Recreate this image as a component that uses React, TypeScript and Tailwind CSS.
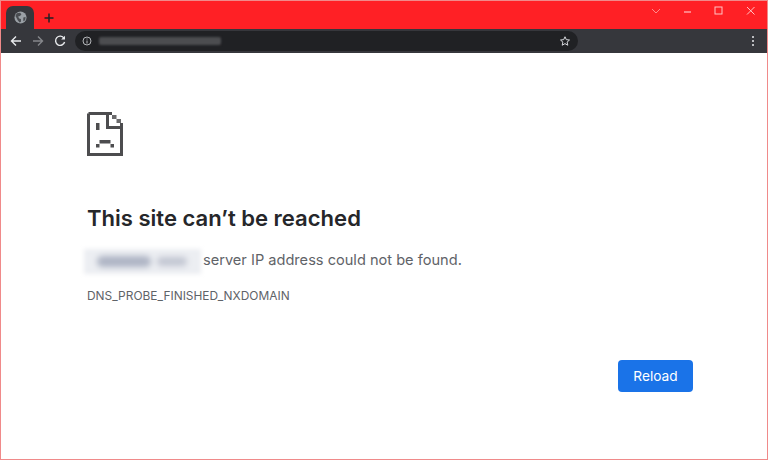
import React from "react";

function Globe() {
  return (
    <svg width="13" height="13" viewBox="0 0 14 14">
      <circle cx="7" cy="7" r="6.5" fill="#9aa0a6" />
      <path d="M3 2.5 L6.5 2 L8 3.5 L6.5 5.5 L4.5 6 L5.5 8 L7.5 8.5 L7.5 11.5 L6 12.5 L4 10 L2.5 7 L1.5 5.5 Z M10 7 L12.5 6.5 L12 10 L10 11 Z" fill="#4a4d52" />
    </svg>
  );
}

function SadFile() {
  return (
    <svg width="36" height="44" viewBox="0 0 36 44" fill="none" className="block">
      <path d="M1.5 1.5H25M34.5 11V42.5H1.5V1.5" stroke="#4d4d4f" strokeWidth="3" fill="none" />
      <path d="M20.5 1.5V15.5H34.5" stroke="#4d4d4f" strokeWidth="3" fill="none" />
      <rect x="25" y="3" width="4.5" height="4" fill="#6a6a6c" />
      <rect x="29.5" y="7" width="4.5" height="4" fill="#6a6a6c" />
      <rect x="9" y="11" width="3.5" height="7" fill="#4d4d4f" />
      <rect x="9" y="32" width="3.5" height="3.5" fill="#4d4d4f" />
      <rect x="12.5" y="28" width="11" height="3.5" fill="#4d4d4f" />
      <rect x="23.5" y="32" width="3.5" height="3.5" fill="#4d4d4f" />
    </svg>
  );
}

export default function App() {
  return (
    <div className="w-[768px] h-[460px] bg-white border border-[#f08a8a] flex flex-col overflow-hidden font-['Inter',sans-serif]">
      <div className="h-[28px] bg-[#ff2025] flex shrink-0 relative">
        <div className="ml-[5px] mt-[5px] w-[28px] h-[23px] bg-[#36373c] rounded-t-[7px] flex items-center justify-center">
          <Globe />
        </div>
        <svg width="10" height="10" viewBox="0 0 10 10" className="ml-[10px] mt-[12px]">
          <path d="M5 0.5V9.5M0.5 5H9.5" stroke="#202124" strokeWidth="1.5" />
        </svg>
        <div className="ml-auto flex items-start">
          <svg width="10" height="6" viewBox="0 0 10 6" className="mt-[7px] mr-[22px]">
            <path d="M1 1L5 5L9 1" stroke="#ff8a8c" strokeWidth="1" fill="none" />
          </svg>
          <svg width="10" height="10" viewBox="0 0 10 10" className="mt-[6px] mr-[21px]">
            <path d="M1 5H8" stroke="#ffc4c5" strokeWidth="1.2" />
          </svg>
          <svg width="10" height="10" viewBox="0 0 10 10" className="mt-[5px] mr-[22px]">
            <rect x="1" y="1" width="7" height="7" stroke="#ffc4c5" strokeWidth="1" fill="none" />
          </svg>
          <svg width="10" height="10" viewBox="0 0 10 10" className="mt-[5px] mr-[11px]">
            <path d="M1 1L8.5 8.5M8.5 1L1 8.5" stroke="#ffc4c5" strokeWidth="1" />
          </svg>
        </div>
      </div>

      <div className="h-[24px] bg-[#36373c] flex items-center shrink-0 relative">
        <svg width="12" height="12" viewBox="0 0 12 12" className="ml-[9px]">
          <path d="M11 6H2M6 1.5L1.5 6L6 10.5" stroke="#e8eaed" strokeWidth="1.4" fill="none" />
        </svg>
        <svg width="12" height="12" viewBox="0 0 12 12" className="ml-[10px]">
          <path d="M1 6H10M6 1.5L10.5 6L6 10.5" stroke="#85878b" strokeWidth="1.4" fill="none" />
        </svg>
        <svg width="12" height="12" viewBox="0 0 12 12" className="ml-[10px]">
          <path d="M10 3.2A4.6 4.6 0 1 0 10.6 7" stroke="#e8eaed" strokeWidth="1.4" fill="none" />
          <path d="M11 0.8V4.6H7.2Z" fill="#e8eaed" />
        </svg>
        <div className="ml-[9px] w-[503px] h-[20px] rounded-full bg-[#202124] flex items-center">
          <svg width="10" height="10" viewBox="0 0 10 10" className="ml-[7px]">
            <circle cx="5" cy="5" r="4" stroke="#b4b6b9" strokeWidth="1" fill="none" />
            <path d="M5 4.5V7.5M5 2.5V3.5" stroke="#b4b6b9" strokeWidth="1" />
          </svg>
          <div className="ml-[7px] w-[122px] h-[8px] bg-[#4c4d50] blur-[1px] rounded-[2px]" />
          <svg width="12" height="12" viewBox="0 0 24 24" className="ml-auto mr-[7px]">
            <path d="M12 3.5L14.6 9.3L21 10L16.2 14.2L17.6 20.5L12 17.2L6.4 20.5L7.8 14.2L3 10L9.4 9.3Z" stroke="#d8dade" strokeWidth="2" fill="none" />
          </svg>
        </div>
        <div className="ml-auto mr-[13px] flex flex-col gap-[2px]">
          <div className="w-[2px] h-[2px] bg-[#e8eaed] rounded-full" />
          <div className="w-[2px] h-[2px] bg-[#e8eaed] rounded-full" />
          <div className="w-[2px] h-[2px] bg-[#e8eaed] rounded-full" />
        </div>
      </div>

      <div className="flex-1 flex flex-col pl-[86px] pt-[59px] pr-[74px]">
        <SadFile />
        <h1 className="mt-[47px] text-[22.05px] leading-[30px] font-semibold text-[#26272a]">
          This site can’t be reached
        </h1>
        <div className="mt-[14px] flex items-center h-[28px]">
          <div className="-ml-[3px] w-[117px] h-[25px] bg-[#eceef2] blur-[2px] flex items-center pl-[13px] gap-[6px] shrink-0">
            <div className="w-[54px] h-[11px] bg-[#aeb4c4] rounded-full blur-[2px]" />
            <div className="w-[30px] h-[9px] bg-[#c2c6d2] rounded-full blur-[2px]" />
          </div>
          <p className="text-[14.6px] text-[#5f6368] ml-[2px]">server IP address could not be found.</p>
        </div>
        <p className="mt-[13px] text-[11.95px] leading-[16px] text-[#5f6368]">DNS_PROBE_FINISHED_NXDOMAIN</p>
        <div className="mt-[56px] flex justify-end">
          <button className="w-[75px] h-[32px] bg-[#1a73e8] rounded-[4px] text-white text-[13.7px]">Reload</button>
        </div>
      </div>
    </div>
  );
}
